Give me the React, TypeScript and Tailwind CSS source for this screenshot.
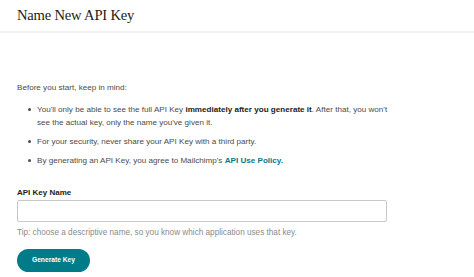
export default function App() {
  const body = "text-[8.1px] leading-[13px] text-[#4b4b4b]";
  return (
    <div className="w-[474px] h-[277px] bg-white overflow-hidden" style={{ fontFamily: '"Liberation Sans", Arial, sans-serif' }}>
      <div className="h-[33px] border-b-2 border-[#f2f2f2] px-[17px] flex items-center">
        <h1 className="text-[14.6px] text-[#241c15] tracking-[-0.2px]" style={{ fontFamily: '"Liberation Serif", "Times New Roman", serif' }}>
          Name New API Key
        </h1>
      </div>

      <div className="px-[17px]">
        <p className={`${body} mt-[48px]`}>Before you start, keep in mind:</p>

        <ul className={`${body} mt-[9px] flex flex-col gap-[6px]`}>
          <li className="flex">
            <span className="w-[3px] h-[3px] rounded-full bg-[#4b4b4b] mt-[5px] ml-[11px] mr-[6px] shrink-0" />
            <span className="whitespace-nowrap">
              You'll only be able to see the full API Key <b className="text-[#241c15]">immediately after you generate it</b>. After that, you won't
              <br />
              see the actual key, only the name you've given it.
            </span>
          </li>
          <li className="flex">
            <span className="w-[3px] h-[3px] rounded-full bg-[#4b4b4b] mt-[5px] ml-[11px] mr-[6px] shrink-0" />
            <span>For your security, never share your API Key with a third party.</span>
          </li>
          <li className="flex">
            <span className="w-[3px] h-[3px] rounded-full bg-[#4b4b4b] mt-[5px] ml-[11px] mr-[6px] shrink-0" />
            <span>
              By generating an API Key, you agree to Mailchimp's <b className="text-[#007c89]">API Use Policy.</b>
            </span>
          </li>
        </ul>

        <label className="block mt-[19px] text-[8px] leading-[13px] font-bold text-[#241c15]">API Key Name</label>
        <input className="block mt-[1px] w-[370px] h-[22px] border border-[#c8c8c8] rounded-[2px]" />
        <p className="mt-[4px] text-[8.2px] leading-[13px] text-[#8a8a8a]">
          Tip: choose a descriptive name, so you know which application uses that key.
        </p>

        <button className="mt-[10px] w-[73px] h-[23px] rounded-full bg-[#007c89] text-white text-[6.7px] font-bold">
          Generate Key
        </button>
      </div>
    </div>
  );
}
